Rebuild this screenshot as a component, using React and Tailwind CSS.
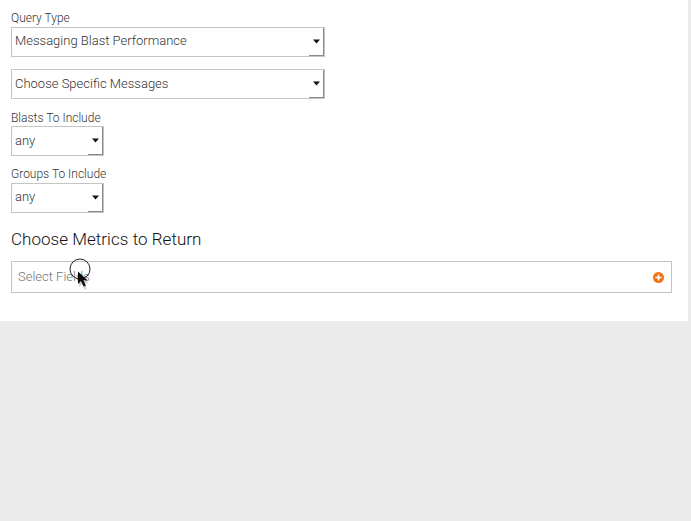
const font = "font-['Roboto',sans-serif]";

function Select({ label, widthClass, top }) {
  return (
    <div className={`flex h-[30px] ${widthClass} items-stretch border border-[#c4c4c4] bg-white`}>
      <span className={`flex-1 pl-[3px] ${top} text-[13px] font-light leading-[18px] text-[#333333]`}>{label}</span>
      <span className="flex w-[15px] items-center justify-center border-b border-r border-b-[#8a8a8a] border-r-[#8a8a8a] pl-[1px]">
        <svg width="7" height="5" viewBox="0 0 7 5"><path d="M0 0.5h7L3.5 4.5z" fill="#111" /></svg>
      </span>
    </div>
  );
}

function Label({ children }) {
  return <div className="text-[12px] font-light leading-[14px] text-[#333333]">{children}</div>;
}

export default function App() {
  return (
    <div className={`${font} h-[521px] w-[691px] overflow-hidden bg-[#ebebeb]`}>
      <div className="h-[321px] w-[688px] bg-white pl-[11px] pr-[16px] pt-[11px]">
        <Label>Query Type</Label>
        <div className="mt-[2px]"><Select label="Messaging Blast Performance" widthClass="w-[314px]" top="pt-[4px]" /></div>
        <div className="mt-[12px]"><Select label="Choose Specific Messages" widthClass="w-[314px]" top="pt-[5px]" /></div>
        <div className="mt-[12px]"><Label>Blasts To Include</Label></div>
        <div className="mt-[1px]"><Select label="any" widthClass="w-[93px]" top="pt-[5px]" /></div>
        <div className="mt-[11px]"><Label>Groups To Include</Label></div>
        <div className="mt-[2px]"><Select label="any" widthClass="w-[93px]" top="pt-[4px]" /></div>
        <div className="mt-[16px] text-[17px] font-light leading-[20px] text-[#111111] tracking-[0.04px]">Choose Metrics to Return</div>
        <div className="relative mt-[12px] flex h-[32px] items-center justify-between border border-[#c4c4c4] pl-[6px] pr-[7px]">
          <span className="text-[13px] font-light text-[#777777]">Select Fields</span>
          <svg width="11" height="11" viewBox="0 0 11 11">
            <circle cx="5.5" cy="5.5" r="5.5" fill="#f47216" />
            <path d="M5.5 2.5v6M2.5 5.5h6" stroke="#fff" strokeWidth="1.6" />
          </svg>
          <svg className="absolute left-[56px] top-[-4px]" width="24" height="32" viewBox="0 0 24 32">
            <circle cx="12" cy="11" r="10" fill="none" stroke="#222" strokeWidth="1" />
            <path d="M11 16v13l3-3 2.6 5.4 2.2-1-2.5-5.2h4.2z" fill="#bbb" opacity="0.7" />
            <path d="M10 13.5v12.5l3-3 2.7 5.6 2.2-1-2.6-5.4h4.2z" fill="#0c0c0c" />
          </svg>
        </div>
      </div>
    </div>
  );
}
